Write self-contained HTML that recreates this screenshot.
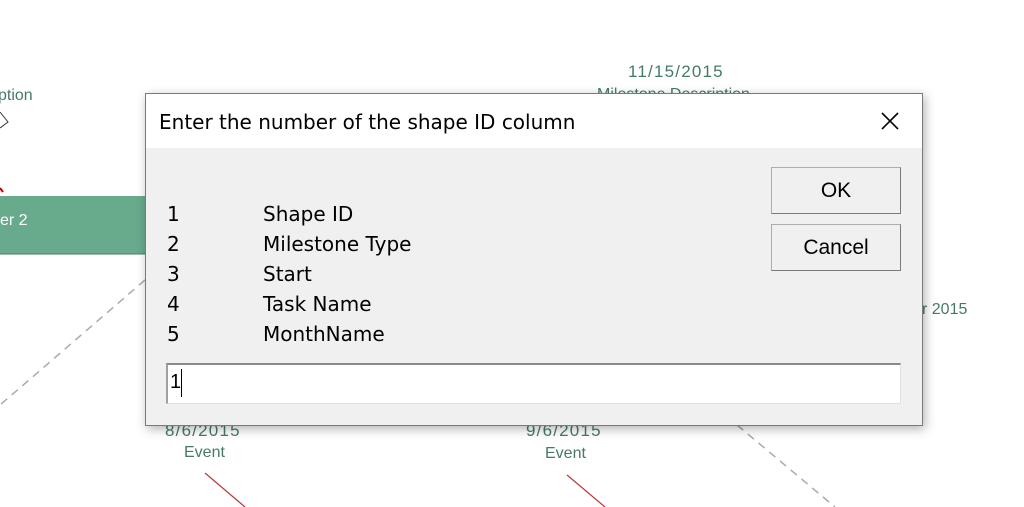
<!DOCTYPE html>
<html><head><style>
body{margin:0;width:1024px;height:507px;background:#fff;position:relative;overflow:hidden;font-family:"Liberation Sans",sans-serif}
.t{position:absolute;color:#467a66;font-size:15px;white-space:nowrap}
.d{font-size:17px;letter-spacing:1.2px}
#dlg{position:absolute;left:145px;top:93px;width:776px;height:331px;background:#f0f0f0;border:1px solid #7a7a7a;box-shadow:2px 3px 10px rgba(0,0,0,.3);z-index:2}
#title{position:absolute;left:0;top:0;width:776px;height:54px;background:#fff}
#title span{position:absolute;left:13px;top:16px;font-family:"DejaVu Sans",sans-serif;font-size:20px;color:#000}
.row{position:absolute;font-family:"DejaVu Sans",sans-serif;font-size:20px;color:#000}
.btn{position:absolute;left:625px;width:128px;height:45px;border:1px solid #adadad;border-right-color:#7a7a7a;border-bottom-color:#7a7a7a;background:#f0f0f0;font-size:21px;text-align:center;line-height:45px;color:#000}
#inp{position:absolute;left:20px;top:269px;width:732px;height:38px;background:#fff;border-top:2px solid #8a8a8a;border-left:2px solid #a0a0a0;border-bottom:1px solid #e0e0e0;border-right:1px solid #e0e0e0}
</style></head><body>
<svg width="1024" height="507" style="position:absolute;left:0;top:0">
<rect x="0" y="196" width="150" height="58" fill="#68ab8c"/>
<line x1="0" y1="254" x2="150" y2="254" stroke="#4a7a66"/>
<line x1="145" y1="280" x2="0" y2="405" stroke="#aaa" stroke-width="1.5" stroke-dasharray="8,6"/>
<line x1="737" y1="425" x2="835" y2="507" stroke="#aaa" stroke-width="1.5" stroke-dasharray="8,6"/>
<line x1="205" y1="473" x2="245" y2="507" stroke="#b84040" stroke-width="1.3"/>
<line x1="567" y1="475" x2="605" y2="507" stroke="#b84040" stroke-width="1.3"/>
<path d="M0 112 L8 122 L0 128" fill="none" stroke="#333"/>
<path d="M0 188 L3 192" stroke="#c00" stroke-width="2"/>
</svg>
<div class="t" style="left:-2px;top:87px;font-size:16px">ption</div>
<div class="t" style="left:0;top:212px;color:#fff;font-size:16px">er 2</div>
<div class="t d" style="left:628px;top:62px">11/15/2015</div>
<div class="t" style="left:597px;top:86px;font-size:16px">Milestone Description</div>
<div class="t" style="left:922px;top:301px;font-size:16px">r 2015</div>
<div class="t d" style="left:165px;top:421px">8/6/2015</div>
<div class="t" style="left:184px;top:444px;font-size:16px">Event</div>
<div class="t d" style="left:526px;top:421px">9/6/2015</div>
<div class="t" style="left:545px;top:445px;font-size:16px">Event</div>
<div id="dlg">
<div id="title"><span>Enter the number of the shape ID column</span>
<svg style="position:absolute;left:735px;top:18px" width="18" height="18"><path d="M1 1L17 17M17 1L1 17" stroke="#000" stroke-width="1.6"/></svg></div>
<div class="row" style="left:21px;top:108px">1</div><div class="row" style="left:117px;top:108px">Shape ID</div>
<div class="row" style="left:21px;top:138px">2</div><div class="row" style="left:117px;top:138px">Milestone Type</div>
<div class="row" style="left:21px;top:168px">3</div><div class="row" style="left:117px;top:168px">Start</div>
<div class="row" style="left:21px;top:198px">4</div><div class="row" style="left:117px;top:198px">Task Name</div>
<div class="row" style="left:21px;top:228px">5</div><div class="row" style="left:117px;top:228px">MonthName</div>
<div class="btn" style="top:73px">OK</div>
<div class="btn" style="top:130px">Cancel</div>
<div id="inp"><span style="position:absolute;left:2px;top:6px;font-size:20px">1</span><span style="position:absolute;left:13px;top:4px;width:1px;height:28px;background:#000"></span></div>
</div>
</body></html>
